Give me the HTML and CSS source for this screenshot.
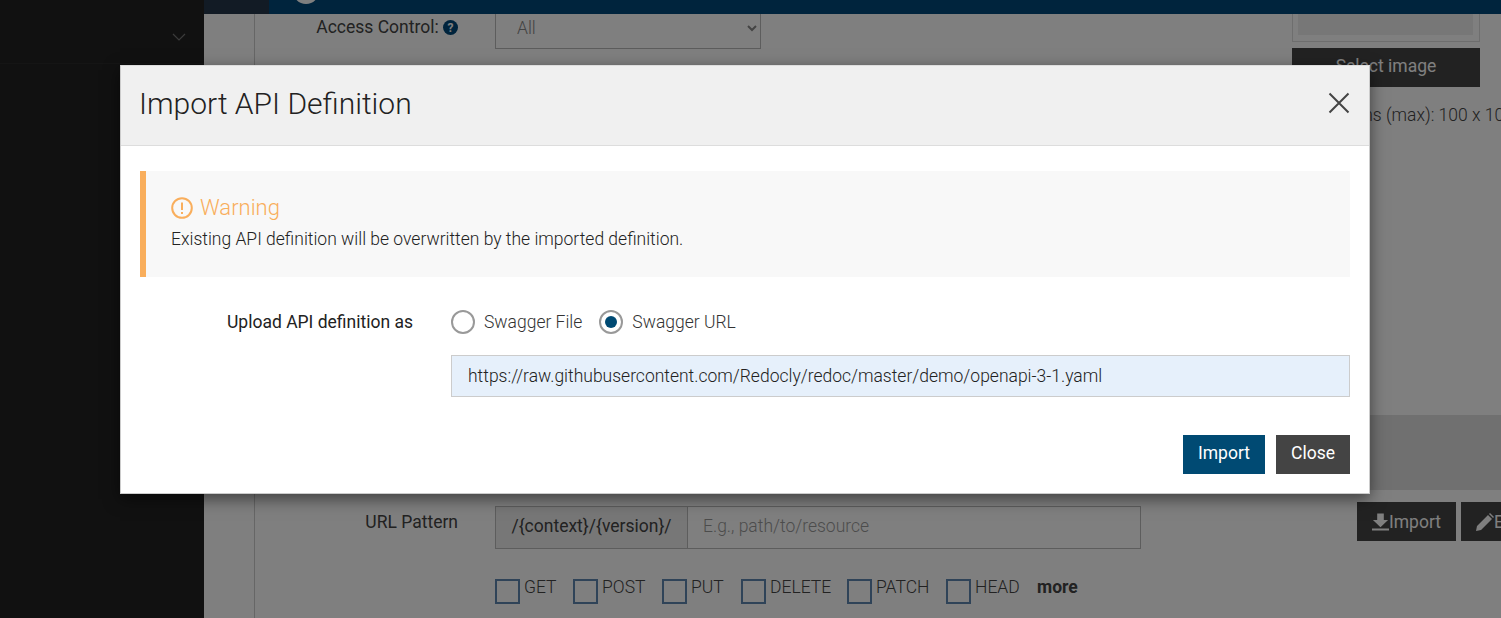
FILE: index.html
```html
<!DOCTYPE html>
<html lang="en">
<head>
<meta charset="utf-8">
<title>Import API Definition</title>
<link rel="stylesheet" href="styles.css">
</head>
<body>
<div class="page">
  <aside class="sidebar">
    <div class="side-row">
      <svg class="side-chev" width="14" height="8" viewBox="0 0 14 8"><path d="M1 1l6 6 6-6" fill="none" stroke="#777" stroke-width="1.2"/></svg>
    </div>
  </aside>
  <main class="main">
    <header class="topbar">
      <div class="topbar-gap"></div>
      <div class="topbar-fill"><span class="topbar-logo"></span></div>
    </header>
    <section class="sec-top">
      <div class="rail"></div>
      <div class="form">
        <div class="row">
          <div class="row-label">Access Control: <svg class="help" width="15" height="15" viewBox="0 0 15 15"><circle cx="7.5" cy="7.5" r="7.5" fill="#00487a"/><text x="7.5" y="11.5" text-anchor="middle" class="help-q">?</text></svg></div>
          <select class="sel"><option>All</option></select>
        </div>
      </div>
      <div class="thumb-col">
        <div class="thumb"><div class="thumb-inner"></div></div>
        <button class="dark-btn select-btn">Select image</button>
        <p class="dims">Dimensions (max): 100 x 100</p>
      </div>
    </section>
    <div class="band"></div>
    <section class="sec-bottom">
      <div class="rail"></div>
      <div class="form">
        <div class="row">
          <div class="row-label url-label">URL Pattern</div>
          <div class="url-group">
            <span class="url-prefix">/{context}/{version}/</span>
            <span class="url-ph">E.g., path/to/resource</span>
          </div>
        </div>
        <div class="verbs">
          <span class="verb v-get"><i class="box"></i>GET</span>
          <span class="verb v-post"><i class="box"></i>POST</span>
          <span class="verb v-put"><i class="box"></i>PUT</span>
          <span class="verb v-del"><i class="box"></i>DELETE</span>
          <span class="verb v-pat"><i class="box"></i>PATCH</span>
          <span class="verb v-head"><i class="box"></i>HEAD</span>
          <b class="more">more</b>
        </div>
      </div>
      <div class="tool-col">
        <button class="dark-btn tool-btn">
          <svg width="19" height="18" viewBox="0 0 18 18"><path d="M5.500 0h7v7H17l-8 7.500L1 7h4.500zM0 15.800h18V18H0z" fill="#fff"/></svg>Import
        </button>
        <button class="dark-btn tool-btn">
          <svg width="18" height="18" viewBox="0 0 18 18"><path d="M0 18l1-5L12 2l4 4L5 17zM13 1l1-1 4 4-1 1z" fill="#fff"/></svg>Edit
        </button>
      </div>
    </section>
  </main>
</div>

<div class="overlay">
  <div class="modal">
    <div class="modal-head">
      <h2 class="modal-title">Import API Definition</h2>
      <svg class="modal-x" width="22" height="22" viewBox="0 0 22 22"><path d="M1.500 1.500l19 19M20.500 1.500l-19 19" stroke="#444" stroke-width="2" fill="none"/></svg>
    </div>
    <div class="modal-body">
      <div class="warn">
        <h3 class="warn-title">
          <svg width="22" height="22" viewBox="0 0 22 22"><circle cx="11" cy="11" r="9.800" fill="none" stroke="#f9ae5c" stroke-width="2"/><path d="M11 5.500v7.500M11 15v2" stroke="#f9ae5c" stroke-width="2" fill="none"/></svg>
          Warning
        </h3>
        <p class="warn-text">Existing API definition will be overwritten by the imported definition.</p>
      </div>
      <div class="upload-row">
        <div class="upload-label">Upload API definition as</div>
        <div class="upload-fields">
          <div class="radios">
            <span class="radio-item"><i class="radio"></i>Swagger File</span>
            <span class="radio-item"><i class="radio on"></i>Swagger URL</span>
          </div>
          <div class="url-input">https://raw.githubusercontent.com/Redocly/redoc/master/demo/openapi-3-1.yaml</div>
        </div>
      </div>
      <div class="modal-foot">
        <button class="mbtn primary">Import</button>
        <button class="mbtn secondary">Close</button>
      </div>
    </div>
  </div>
</div>
</body>
</html>
```
FILE: styles.css
```css
* { box-sizing: border-box; }
html, body { margin: 0; height: 618px; overflow: hidden; }
body { font-family: Roboto, "Liberation Sans", sans-serif; font-size: 17.5px; color: #444; background: #fff; position: relative; }
p, h2, h3 { margin: 0; font-weight: inherit; }

.page { display: flex; width: 1501px; height: 618px; overflow: hidden; }
.sidebar { width: 204px; flex: none; background: #222; }
.side-row { height: 64px; border-bottom: 1px solid #2a2a2a; display: flex; justify-content: flex-end; padding: 33px 18px 0 0; }
.side-chev { display: block; }

.main { flex: 1; min-width: 0; background: #fff; }
.topbar { display: flex; height: 14px; position: relative; z-index: 1; }
.topbar-gap { width: 65px; background: #24364a; }
.topbar-fill { flex: 1; background: #00487a; padding-left: 24px; overflow: hidden; }
.topbar-logo { display: block; width: 26px; height: 26px; border-radius: 50%; border: 4px solid #fff; margin-top: -22px; }

.sec-top { display: flex; height: 401px; }
.sec-bottom { display: flex; height: 128px; }
.rail { width: 51px; flex: none; border-right: 1px solid #ccc; }
.form { flex: 1; min-width: 0; }
.row { display: grid; grid-template-columns: 203px 1fr; column-gap: 37px; }
.row-label { text-align: right; line-height: 26px; }
.help { vertical-align: -2px; }
.help-q { font: 700 12px Roboto, sans-serif; fill: #fff; }
.sel { display: block; width: 266px; height: 42px; margin-top: -7px; padding-left: 17px; border: 1px solid #bbb; background: #fff; color: #888; font: 300 17.5px Roboto, sans-serif; }

.thumb-col { width: 188px; flex: none; margin-right: 21px; }
.thumb { height: 28px; border: 1px solid #ddd; border-top: 0; padding: 0 6px 6px 5px; }
.thumb-inner { height: 21px; background: #eee; }
.dark-btn { background: #444; color: #fff; border: 0; font: 400 17.5px Roboto, sans-serif; }
.select-btn { display: block; width: 188px; height: 39px; margin-top: 6px; padding: 0 0 4px; }
.dims { margin-top: 18px; white-space: nowrap; font-weight: 300; margin-left: -1px; }

.band { height: 75px; background: #e0e0e0; }

.sec-bottom .form { padding-top: 16px; }
.url-label { padding-top: 3px; }
.url-group { display: flex; width: 646px; height: 43px; border: 1px solid #bbb; }
.url-prefix { width: 192px; flex: none; background: #eee; border-right: 1px solid #bbb; text-align: center; line-height: 38px; }
.url-ph { padding-left: 15px; line-height: 38px; color: #999; font-weight: 300; }

.verbs { display: flex; align-items: flex-start; margin: 30px 0 0 240px; }
.verb { display: flex; font-weight: 300; line-height: 16px; }
.box { display: block; width: 25px; height: 25px; border: 2px solid #5f86b0; margin-right: 4px; }
.v-get { width: 78px; } .v-post { width: 89px; } .v-put { width: 79px; }
.v-del { width: 106px; } .v-pat { width: 99px; } .v-head { width: 91px; }
.more { line-height: 16px; font-weight: 700; }

.tool-col { width: 144px; flex: none; display: flex; gap: 5px; padding-top: 12px; overflow: hidden; }
.tool-btn { flex: none; height: 39px; padding: 0 15px; display: flex; align-items: center; }
.tool-btn:first-child { width: 99px; }

.overlay { position: absolute; inset: 0; z-index: 2; background: rgba(0, 0, 0, .5); padding: 65px 131px 0 120px; }
.modal { height: 429px; background: #fff; border: 1px solid #ccc; border-top-color: #ddd; box-shadow: 0 5px 15px rgba(0, 0, 0, .5); }
.modal-head { height: 80px; background: #f0f0f0; border-bottom: 1px solid #ddd; display: flex; align-items: center; justify-content: space-between; padding: 0 19px 4px 18px; }
.modal-title { font-size: 30px; font-weight: 300; color: #222; }
.modal-x { display: block; margin-top: -2px; }

.modal-body { padding: 25px 19px 0 19px; }
.warn { height: 106px; background: #f8f8f8; border-left: 6px solid #f9ae5c; padding: 24px 0 0 25px; }
.warn-title { display: flex; align-items: center; gap: 7px; font-size: 22px; font-weight: 300; color: #f9ae5c; line-height: 26px; }
.warn-text { margin-top: 8px; font-weight: 300; color: #222; line-height: 20px; }

.upload-row { display: flex; margin-top: 33px; }
.upload-label { width: 273px; flex: none; text-align: right; color: #222; line-height: 24px; }
.upload-fields { margin-left: 38px; flex: 1; }
.radios { display: flex; gap: 17px; font-weight: 300; color: #333; height: 24px; }
.radio-item { display: flex; align-items: center; gap: 9px; line-height: 26px; }
.radio { display: flex; width: 24px; height: 24px; border: 2px solid #999; border-radius: 50%; align-items: center; justify-content: center; }
.radio.on::after { content: ""; width: 12px; height: 12px; border-radius: 50%; background: #004a73; }
.url-input { margin-top: 21px; height: 42px; background: #e6f0fb; border: 1px solid #ccc; padding-left: 16px; line-height: 40px; color: #222; font-weight: 300; }

.modal-foot { display: flex; justify-content: flex-end; gap: 11px; margin-top: 38px; }
.mbtn { height: 39px; border: 0; padding: 0 0 4px; color: #fff; font: 400 17.5px Roboto, sans-serif; }
.primary { width: 82px; background: #004a73; }
.secondary { width: 74px; background: #444; }
```
